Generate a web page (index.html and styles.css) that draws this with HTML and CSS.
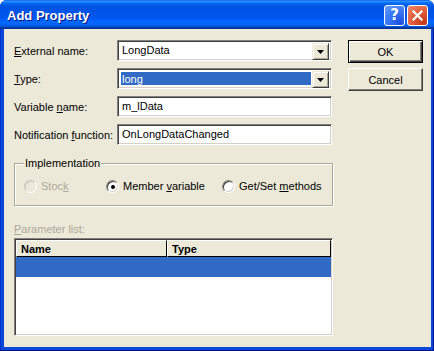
FILE: index.html
```html
<!DOCTYPE html>
<html>
<head>
    <title>Add Property</title>
    <link rel="stylesheet" href="styles.css">
</head>
<body>
    <div class="window">
        <div class="titlebar">
            <span class="title">Add Property</span>
            <div class="title-buttons">
                <div class="tb-btn help">?</div>
                <div class="tb-btn close">
                    <svg width="11" height="11" viewBox="0 0 11 11"><path d="M1.5 1.5L9.5 9.5M9.5 1.5L1.5 9.5" stroke="#fff" stroke-width="2.2" stroke-linecap="square"/></svg>
                </div>
            </div>
        </div>
        <div class="client">
            <div class="main">
                <div class="fields">
                    <label><u>E</u>xternal name:</label>
                    <div class="field combo">
                        <span class="combo-text">LongData</span>
                        <span class="drop raised"><svg width="7" height="4" viewBox="0 0 7 4"><polygon points="0,0 7,0 3.5,4" fill="#000"/></svg></span>
                    </div>
                    <label><u>T</u>ype:</label>
                    <div class="field combo">
                        <span class="combo-text selected">long</span>
                        <span class="drop raised"><svg width="7" height="4" viewBox="0 0 7 4"><polygon points="0,0 7,0 3.5,4" fill="#000"/></svg></span>
                    </div>
                    <label>Variable <u>n</u>ame:</label>
                    <div class="field edit">m_lData</div>
                    <label>Notification <u>f</u>unction:</label>
                    <div class="field edit">OnLongDataChanged</div>
                </div>

                <fieldset class="group">
                    <legend>Implementation</legend>
                    <div class="radios">
                        <div class="radio disabled"><span class="circle"></span><span>Stoc<u>k</u></span></div>
                        <div class="radio"><span class="circle checked"></span><span>Member <u>v</u>ariable</span></div>
                        <div class="radio"><span class="circle"></span><span>Get/Set <u>m</u>ethods</span></div>
                    </div>
                </fieldset>

                <div class="list-label"><u>P</u>arameter list:</div>
                <div class="listview">
                    <div class="lv-header">
                        <div class="lv-col col-name">Name</div>
                        <div class="lv-col col-type">Type</div>
                    </div>
                    <div class="lv-row selected"></div>
                </div>
            </div>
            <div class="side">
                <div class="btn default">OK</div>
                <div class="btn">Cancel</div>
            </div>
        </div>
    </div>
</body>
</html>
```

FILE: styles.css
```css
body {
    margin: 0;
    background: #fff;
    font-family: "Liberation Sans", Arial, sans-serif;
    font-size: 11px;
    color: #000;
}
.window {
    width: 434px;
    height: 351px;
    box-sizing: border-box;
    display: flex;
    flex-direction: column;
    background: #0847D8;
    border-radius: 7px 7px 0 0;
    overflow: hidden;
    box-shadow: inset -1px -1px 0 #00138C, inset 1px 0 0 #0831D9;
}
.titlebar {
    height: 29px;
    flex-shrink: 0;
    display: flex;
    align-items: center;
    justify-content: space-between;
    padding: 0 6px 0 7px;
    background: linear-gradient(to bottom, #0058EE 0%, #3593FF 4%, #288EFF 6%, #127DFF 8%, #036FFC 10%, #0262EE 14%, #0057E5 20%, #0054E3 24%, #0055EB 56%, #005BF5 66%, #026AFE 76%, #0062EF 86%, #0052D6 92%, #0040AB 94%, #003092 100%);
}
.title {
    color: #fff;
    font-weight: bold;
    font-size: 13px;
    text-shadow: 1px 1px 0 #0A1883;
    padding-top: 1px;
}
.title-buttons {
    display: flex;
    gap: 2px;
    padding-top: 1px;
}
.tb-btn {
    width: 21px;
    height: 21px;
    box-sizing: border-box;
    border: 1px solid #fff;
    border-radius: 3px;
    display: flex;
    align-items: center;
    justify-content: center;
}
.help {
    background: radial-gradient(circle at 80% 90%, #1E4FE0 0%, #3C7DF5 60%, #6FA0F7 100%);
    color: #fff;
    font-weight: bold;
    font-size: 15px;
    font-family: "DejaVu Sans", sans-serif;
}
.close {
    background: radial-gradient(circle at 85% 90%, #C4391A 0%, #E0603D 55%, #F08C6C 100%);
}
.client {
    flex: 1;
    margin: 0 3px 4px 4px;
    background: #ECE9D8;
    display: flex;
    gap: 15px;
    padding: 11px 0 0 10px;
}
.main {
    width: 319px;
}
.fields {
    display: grid;
    grid-template-columns: 103px 215px;
    grid-auto-rows: 21px;
    row-gap: 7px;
    align-items: center;
}
.field {
    height: 21px;
    box-sizing: border-box;
    background: #fff;
    border: 1px solid;
    border-color: #808080 #fff #fff #808080;
    box-shadow: inset 1px 1px 0 #404040, inset -1px -1px 0 #D4D0C8;
}
.combo {
    display: flex;
    padding: 2px;
}
.combo-text {
    flex: 1;
    padding-left: 2px;
    line-height: 15px;
}
.combo-text.selected {
    background: #316AC5;
    color: #fff;
    margin: 1px;
    padding-left: 1px;
}
.drop {
    width: 17px;
    height: 17px;
    box-sizing: border-box;
    display: flex;
    align-items: center;
    justify-content: center;
}
.raised {
    background: #ECE9D8;
    border: 1px solid;
    border-color: #ECE9D8 #404040 #404040 #ECE9D8;
    box-shadow: inset 1px 1px 0 #fff, inset -1px -1px 0 #ACA899;
}
.edit {
    padding: 0 4px;
    line-height: 19px;
}
.group {
    margin: 12px 0 0 0;
    padding: 10px 7px 12px 9px;
    border: 1px solid #ACA899;
    box-shadow: inset 1px 1px 0 #fff, 1px 1px 0 #fff;
}
.group legend {
    padding: 0 1px;
    background: #ECE9D8;
    line-height: 13px;
}
.radios {
    display: grid;
    grid-template-columns: 82px 116px auto;
}
.radio {
    display: flex;
    align-items: center;
    gap: 4px;
    line-height: 13px;
}
.radio.disabled {
    color: #ACA899;
}
.circle {
    width: 13px;
    height: 13px;
    box-sizing: border-box;
    border-radius: 50%;
    background: #fff;
    border: 1px solid;
    border-color: #808080 #fff #fff #808080;
    box-shadow: inset 1px 1px 0 #404040, inset -1px -1px 0 #D4D0C8;
    display: flex;
    align-items: center;
    justify-content: center;
}
.radio.disabled .circle {
    background: #ECE9D8;
    border-color: #C8C6BC #fff #fff #C8C6BC;
    box-shadow: inset 1px 1px 0 #D8D6CC;
}
.circle.checked::after {
    content: "";
    width: 4px;
    height: 4px;
    border-radius: 50%;
    background: #000;
}
.list-label {
    margin-top: 17px;
    color: #ACA899;
    line-height: 13px;
}
.listview {
    margin-top: 2px;
    height: 98px;
    box-sizing: border-box;
    background: #fff;
    border: 1px solid;
    border-color: #808080 #fff #fff #808080;
    box-shadow: inset 1px 1px 0 #404040, inset -1px -1px 0 #D4D0C8;
    padding: 1px;
}
.lv-header {
    display: flex;
    height: 17px;
}
.lv-col {
    box-sizing: border-box;
    background: #ECE9D8;
    font-weight: bold;
    padding: 1px 0 0 4px;
    line-height: 14px;
    border: 1px solid;
    border-color: #fff #000 #000 #fff;
}
.col-name {
    width: 151px;
}
.col-type {
    flex: 1;
}
.lv-row {
    height: 20px;
}
.lv-row.selected {
    background: #316AC5;
}
.side {
    display: flex;
    flex-direction: column;
    gap: 5px;
}
.btn {
    width: 75px;
    height: 23px;
    box-sizing: border-box;
    display: flex;
    align-items: center;
    justify-content: center;
    background: #ECE9D8;
    border: 1px solid;
    border-color: #fff #404040 #404040 #fff;
    box-shadow: inset -1px -1px 0 #808080;
}
.btn.default {
    border-color: #000;
    box-shadow: inset 1px 1px 0 #fff, inset -1px -1px 0 #404040, inset -2px -2px 0 #808080;
}
```
